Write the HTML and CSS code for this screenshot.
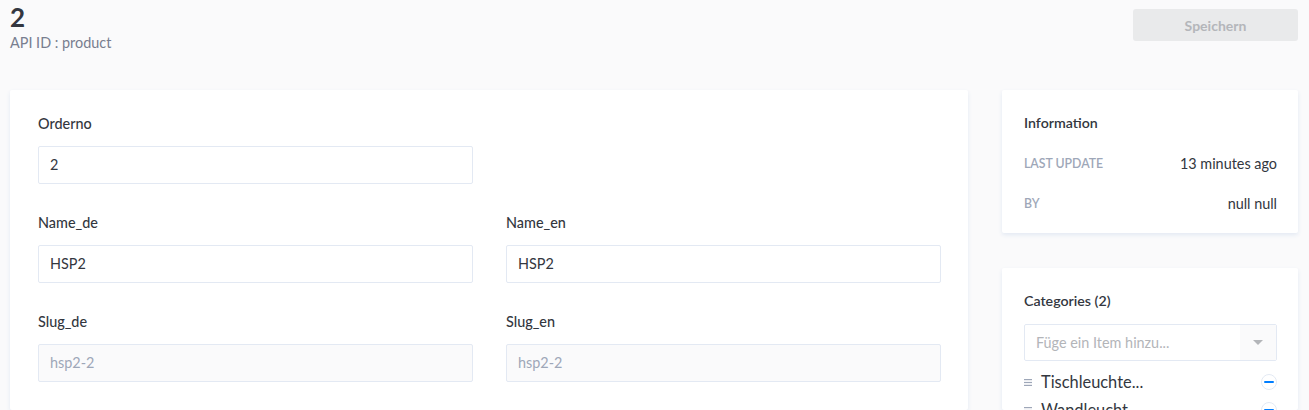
FILE: index.html
```html
<!DOCTYPE html>
<html>
<head>
<meta charset="utf-8">
<link rel="stylesheet" href="styles.css">
</head>
<body>
<div class="page">
  <header class="header">
    <div class="title-block">
      <h1 class="title">2</h1>
      <p class="subtitle">API ID : product</p>
    </div>
    <button class="save-btn">Speichern</button>
  </header>
  <div class="content">
    <main class="main-card">
      <div class="row">
        <div class="field">
          <label class="label">Orderno</label>
          <div class="input">2</div>
        </div>
        <div class="field"></div>
      </div>
      <div class="row">
        <div class="field">
          <label class="label">Name_de</label>
          <div class="input">HSP2</div>
        </div>
        <div class="field">
          <label class="label">Name_en</label>
          <div class="input">HSP2</div>
        </div>
      </div>
      <div class="row">
        <div class="field">
          <label class="label">Slug_de</label>
          <div class="input disabled">hsp2-2</div>
        </div>
        <div class="field">
          <label class="label">Slug_en</label>
          <div class="input disabled">hsp2-2</div>
        </div>
      </div>
    </main>
    <aside class="aside">
      <section class="side-card info-card">
        <h2 class="side-title">Information</h2>
        <div class="info-row">
          <span class="info-key">Last update</span>
          <span class="info-val">13 minutes ago</span>
        </div>
        <div class="info-row">
          <span class="info-key">By</span>
          <span class="info-val">null null</span>
        </div>
      </section>
      <section class="side-card cat-card">
        <h2 class="side-title">Categories (2)</h2>
        <div class="select">
          <span class="select-ph">Füge ein Item hinzu...</span>
          <span class="select-arrow"><svg width="10" height="6" viewBox="0 0 10 6"><path d="M0 0h10L5 5z" fill="#b3b5b9"/></svg></span>
        </div>
        <ul class="rel-list">
          <li class="rel-item">
            <span class="grip"><svg width="8" height="7" viewBox="0 0 8 7"><rect y="0" width="8" height="1.2" fill="#9ea7b8"/><rect y="2.9" width="8" height="1.2" fill="#9ea7b8"/><rect y="5.8" width="8" height="1.2" fill="#9ea7b8"/></svg></span>
            <span class="rel-name">Tischleuchte...</span>
            <span class="remove"><svg width="10" height="2" viewBox="0 0 10 2"><rect width="10" height="2" rx="1" fill="#007eff"/></svg></span>
          </li>
          <li class="rel-item">
            <span class="grip"><svg width="8" height="7" viewBox="0 0 8 7"><rect y="0" width="8" height="1.2" fill="#9ea7b8"/><rect y="2.9" width="8" height="1.2" fill="#9ea7b8"/><rect y="5.8" width="8" height="1.2" fill="#9ea7b8"/></svg></span>
            <span class="rel-name">Wandleucht...</span>
            <span class="remove"><svg width="10" height="2" viewBox="0 0 10 2"><rect width="10" height="2" rx="1" fill="#007eff"/></svg></span>
          </li>
        </ul>
      </section>
    </aside>
  </div>
</div>
</body>
</html>
```

FILE: styles.css
```css
* { box-sizing: border-box; }
html, body { margin: 0; padding: 0; }
body {
  background: #fafafb;
  font-family: Lato, "Open Sans", sans-serif;
  color: #333740;
  width: 1309px;
  height: 410px;
  overflow: hidden;
}
.page { padding: 0 11px 0 10px; }
.header {
  display: flex;
  justify-content: space-between;
  align-items: flex-start;
  height: 90px;
}
.title {
  margin: 0;
  font-size: 26px;
  line-height: 34px;
  font-weight: 700;
  color: #333740;
}
.subtitle {
  margin: 0;
  font-size: 14.4px;
  line-height: 18px;
  color: #787e8f;
}
.save-btn {
  margin-top: 9px;
  width: 165px;
  height: 32px;
  border: 0;
  border-radius: 3px;
  background: #e9eaeb;
  color: #b4b6ba;
  font-family: Lato, sans-serif;
  font-size: 14px;
  font-weight: 700;
  padding: 0;
}
.content {
  display: flex;
  gap: 34px;
  align-items: flex-start;
}
.main-card {
  width: 958px;
  height: 320px;
  background: #fff;
  border-radius: 2px;
  box-shadow: 0 2px 4px #e3e9f3;
  padding: 25px 27px 0 28px;
}
.row {
  display: grid;
  grid-template-columns: 435px 435px;
  column-gap: 33px;
  margin-bottom: 30px;
}
.label {
  display: block;
  font-size: 14.4px;
  line-height: 18px;
  font-weight: 500;
  color: #333740;
  margin-bottom: 13px;
}
.input {
  height: 38px;
  border: 1px solid #e3e9f3;
  border-radius: 2px;
  background: #fff;
  padding: 0 11px;
  font-size: 14.4px;
  line-height: 36px;
  color: #333740;
}
.input.disabled {
  background: #fafafb;
  color: #9ea7b8;
}
.aside {
  width: 296px;
  display: flex;
  flex-direction: column;
  gap: 35px;
}
.side-card {
  background: #fff;
  border-radius: 2px;
  box-shadow: 0 2px 4px #e3e9f3;
  padding: 24px 21px 0 22px;
}
.info-card { height: 143px; }
.cat-card { height: 142px; overflow: hidden; }
.side-title {
  margin: 0;
  font-size: 14.2px;
  line-height: 18px;
  font-weight: 600;
  color: #333740;
}
.info-row {
  display: flex;
  justify-content: space-between;
  align-items: center;
  margin-top: 22px;
  height: 18px;
}
.info-key {
  font-size: 12.3px;
  font-weight: 600;
  text-transform: uppercase;
  color: #9ea7b8;
}
.info-val {
  font-size: 14.4px;
  color: #333740;
}
.cat-card .side-title { margin-bottom: 14px; }
.select {
  display: flex;
  height: 37px;
  border: 1px solid #e3e9f3;
  border-radius: 2px;
  background: #fff;
}
.select-ph {
  flex: 1;
  padding-left: 11px;
  font-size: 14.4px;
  line-height: 35px;
  color: #b3b5b9;
}
.select-arrow {
  width: 36px;
  background: #fafafb;
  display: flex;
  align-items: center;
  justify-content: center;
}
.rel-list {
  list-style: none;
  margin: 0;
  padding: 0;
}
.rel-item {
  display: flex;
  align-items: center;
  height: 28px;
  margin-top: 7px;
}
.rel-item + .rel-item { margin-top: 0; }
.grip { width: 17px; display: flex; align-items: center; }
.rel-name {
  flex: 1;
  font-size: 16.4px;
  line-height: 20px;
  color: #333740;
}
.remove {
  width: 16px;
  height: 16px;
  border: 1px solid #e3e9f3;
  border-radius: 50%;
  display: flex;
  align-items: center;
  justify-content: center;
  background: #fff;
}
```
